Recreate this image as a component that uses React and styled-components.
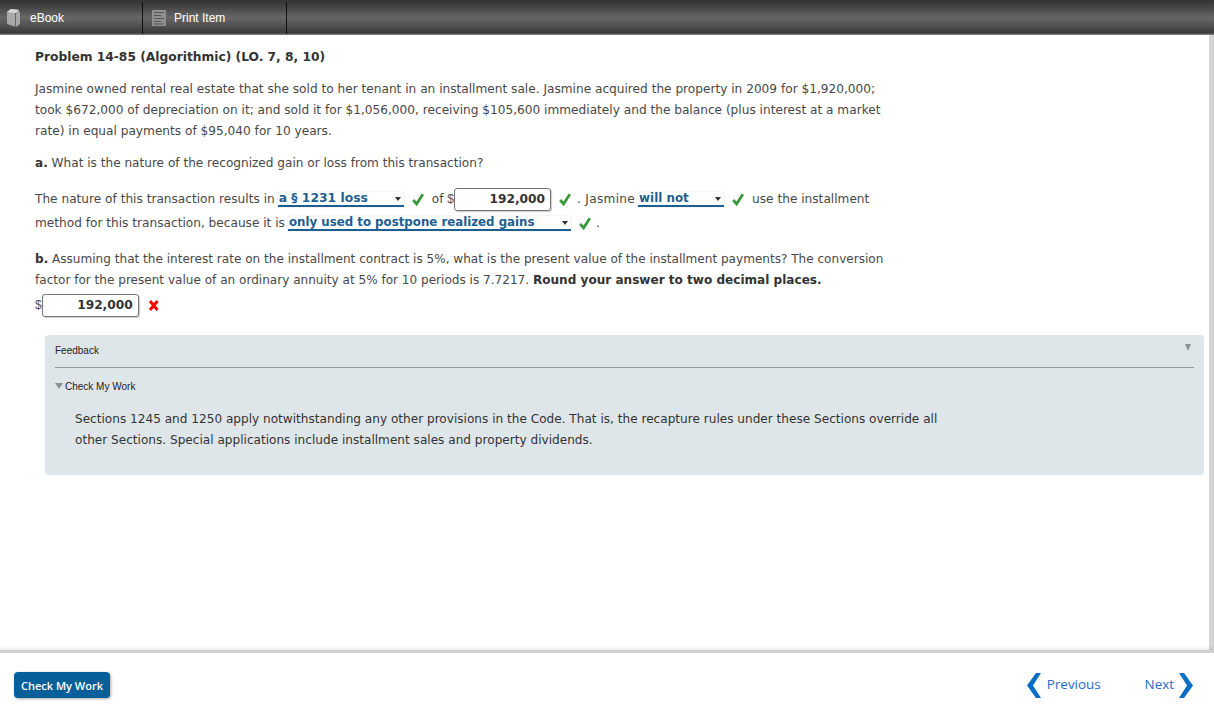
import React from "react";
import styled, { createGlobalStyle } from "styled-components";

const GlobalStyle = createGlobalStyle`
  html, body {
    margin: 0;
    padding: 0;
    background: #fff;
  }
  body {
    font-family: "DejaVu Sans", Verdana, sans-serif;
    color: #444;
    overflow: hidden;
  }
`;

const Page = styled.div`
  width: 1214px;
  height: 705px;
  display: flex;
  flex-direction: column;
  overflow: hidden;
`;

const Toolbar = styled.div`
  height: 35px;
  flex: none;
  display: flex;
  background: linear-gradient(#333 0%, #4a4a4a 25%, #676767 50%, #4f4f4f 75%, #3a3a3a 94%, #8a8a8a 100%);
  box-sizing: border-box;
`;

const ToolItem = styled.div`
  width: ${(p) => p.$width}px;
  height: 32px;
  margin-top: 2px;
  box-sizing: border-box;
  display: flex;
  align-items: center;
  gap: ${(p) => p.$gap}px;
  padding-left: ${(p) => p.$pad}px;
  border-right: 1px solid #111;
  color: #fff;
  font: 12px "Liberation Sans", Arial, sans-serif;
`;

const Body = styled.div`
  flex: 1;
  display: flex;
  min-height: 0;
`;

const Content = styled.div`
  flex: 1;
  padding: 14px 5px 0 35px;
`;

const ScrollEdge = styled.div`
  width: 5px;
  background: #d4d4d4;
`;

const Title = styled.h1`
  margin: 0 0 14px;
  font-size: 12.25px;
  line-height: 16px;
  font-weight: 700;
  color: #333;
`;

const Para = styled.p`
  margin: ${(p) => p.$before || 0}px 0 ${(p) => p.$after || 0}px;
  font-size: ${(p) => p.$size || 12.1}px;
  line-height: 21px;
  white-space: nowrap;
  color: #484848;
  b {
    color: #333;
  }
`;

const AnswerLine = styled.div`
  display: flex;
  align-items: center;
  height: 24px;
  margin-top: ${(p) => p.$before || 0}px;
  font-size: 12.15px;
  white-space: pre;
  color: #484848;
`;

const Stretched = styled.span`
  letter-spacing: 0.3px;
`;

const SelectBox = styled.span`
  width: ${(p) => p.$width}px;
  height: 13px;
  margin-left: 3px;
  margin-right: -1px;
  padding-left: 1px;
  position: relative;
  display: inline-block;
  border-bottom: 2px solid #1d5f91;
  border-radius: 2px 2px 0 0;
  box-shadow: 0 0 1px #999;
  color: #1d5f91;
  font-weight: 700;
  font-size: ${(p) => p.$size}px;
  line-height: 12px;
  &::after {
    content: "";
    position: absolute;
    right: 3px;
    top: 5px;
    border-left: 3px solid transparent;
    border-right: 3px solid transparent;
    border-top: 4px solid #333;
  }
`;

const AmountInput = styled.span`
  width: 97px;
  height: 23px;
  box-sizing: border-box;
  display: inline-flex;
  align-items: center;
  justify-content: flex-end;
  padding-right: 5px;
  border: 1px solid #777;
  border-radius: 3px;
  box-shadow: 1px 1px 1px #ccc;
  font-weight: 700;
  font-size: 12.2px;
  color: #333;
  background: #fff;
`;

const Mark = styled.svg`
  width: 12px;
  height: 13px;
  flex: none;
  margin: 0 ${(p) => p.$right}px 0 ${(p) => p.$left}px;
`;

const Currency = styled.span`
  font: 12px "Liberation Sans", Arial, sans-serif;
  color: #555;
`;

const FeedbackPanel = styled.section`
  width: 1159px;
  height: 140px;
  margin: 18px 0 0 10px;
  box-sizing: border-box;
  position: relative;
  padding: 8px 10px 0 10px;
  background: #dfe6e9;
  border-radius: 4px;
`;

const FeedbackHead = styled.div`
  height: 25px;
  box-sizing: border-box;
  border-bottom: 1px solid #8f9a9c;
  font: 10px/15px "Liberation Sans", Arial, sans-serif;
  color: #222;
`;

const PanelCaret = styled.span`
  position: absolute;
  top: 9px;
  right: 13px;
  border-left: 3px solid transparent;
  border-right: 3px solid transparent;
  border-top: 7px solid #8a9496;
`;

const WorkRow = styled.div`
  display: flex;
  align-items: center;
  gap: 2px;
  margin-top: 12px;
  height: 12px;
  font: 10px "Liberation Sans", Arial, sans-serif;
  color: #222;
`;

const SmallCaret = styled.span`
  border-left: 4px solid transparent;
  border-right: 4px solid transparent;
  border-top: 6px solid #8a9496;
`;

const WorkText = styled.p`
  margin: 17px 0 0 20px;
  font-size: 12.1px;
  line-height: 21px;
  white-space: nowrap;
  color: #333;
`;

const Footer = styled.footer`
  height: 55px;
  flex: none;
  box-sizing: border-box;
  display: flex;
  align-items: center;
  justify-content: space-between;
  padding: 12px 21px 0 14px;
  border-top: 3px solid #cfcfcf;
  box-shadow: 0 -2px 3px rgba(0, 0, 0, 0.08);
  background: #fff;
`;

const CheckButton = styled.button`
  width: 96px;
  height: 26px;
  padding: 0;
  border: none;
  border-radius: 4px;
  background: #075f99;
  box-shadow: 1px 1px 3px #aaa;
  color: #fff;
  font: 600 11px "Open Sans", sans-serif;
`;

const Pager = styled.nav`
  display: flex;
  align-items: center;
`;

const PagerLink = styled.a`
  display: flex;
  align-items: center;
  gap: ${(p) => p.$gap}px;
  margin-left: ${(p) => p.$left || 0}px;
  font: 13.4px "Open Sans", sans-serif;
  color: #1f69c9;
`;

const PagerLabel = styled.span`
  margin-top: -2px;
`;

const Chevron = styled.svg`
  width: 14px;
  height: 25px;
`;

const BookIcon = () => (
  <svg width="13" height="18" viewBox="0 0 13 18">
    <path d="M0 3 L4 0 L12 1 L12 3 L13 3 L13 15 L9 18 L0 15 Z" fill="#a8a8a8" />
    <path d="M4 0 L12 1 L8 4 L0 3 Z" fill="#d8d8d8" />
    <path d="M8.5 4 L8.5 18" stroke="#666" strokeWidth="1" />
  </svg>
);

const PrintIcon = () => (
  <svg width="14" height="16" viewBox="0 0 14 16">
    <rect width="14" height="16" fill="#8f8f8f" />
    <path d="M2 2.5h10M2 5.5h7M2 8.5h10M2 11.5h7M2 14h10" stroke="#555" strokeWidth="1" />
  </svg>
);

const Check = ({ left, right }) => (
  <Mark viewBox="0 0 12 13" $left={left} $right={right}>
    <path d="M1.2 7 L4.6 11 L10.8 1.2" fill="none" stroke="#3a9a3c" strokeWidth="2.8" />
  </Mark>
);

const Cross = ({ left }) => (
  <Mark viewBox="0 0 12 13" $left={left} $right={0}>
    <path d="M2 2 L9.5 11 M9.5 2 L2 11" fill="none" stroke="#f00" strokeWidth="3" />
  </Mark>
);

export default function App() {
  return (
    <Page>
      <GlobalStyle />
      <Toolbar>
        <ToolItem $width={143} $pad={7} $gap={10}>
          <BookIcon />
          eBook
        </ToolItem>
        <ToolItem $width={144} $pad={9} $gap={8}>
          <PrintIcon />
          Print Item
        </ToolItem>
      </Toolbar>
      <Body>
        <Content>
          <Title>Problem 14-85 (Algorithmic) (LO. 7, 8, 10)</Title>
          <Para $after={11} $size={12.15}>
            Jasmine owned rental real estate that she sold to her tenant in an installment sale. Jasmine acquired the property in 2009 for $1,920,000;
            <br />
            took $672,000 of depreciation on it; and sold it for $1,056,000, receiving $105,600 immediately and the balance (plus interest at a market
            <br />
            rate) in equal payments of $95,040 for 10 years.
          </Para>
          <Para $after={13}>
            <b>a.</b> What is the nature of the recognized gain or loss from this transaction?
          </Para>
          <AnswerLine>
            The nature of this transaction results in
            <SelectBox $width={125} $size={12.35}>a § 1231 loss</SelectBox>
            <Check left={9} right={8} />
            of <Currency>$</Currency>
            <AmountInput>192,000</AmountInput>
            <Check left={8} right={6} />
            <Stretched>. Jasmine</Stretched>
            <SelectBox $width={85} $size={11.9}>will not</SelectBox>
            <Check left={9} right={8} />
            use the installment
          </AnswerLine>
          <AnswerLine>
            method for this transaction, because it is
            <SelectBox $width={282} $size={11.8}>only used to postpone realized gains</SelectBox>
            <Check left={9} right={5} />
            .
          </AnswerLine>
          <Para $before={14} $size={12.07}>
            <b>b.</b> Assuming that the interest rate on the installment contract is 5%, what is the present value of the installment payments? The conversion
            <br />
            factor for the present value of an ordinary annuity at 5% for 10 periods is 7.7217. <b>Round your answer to two decimal places.</b>
          </Para>
          <AnswerLine $before={2}>
            <Currency>$</Currency>
            <AmountInput>192,000</AmountInput>
            <Cross left={9} />
          </AnswerLine>
          <FeedbackPanel>
            <FeedbackHead>Feedback</FeedbackHead>
            <PanelCaret />
            <WorkRow>
              <SmallCaret />
              Check My Work
            </WorkRow>
            <WorkText>
              Sections 1245 and 1250 apply notwithstanding any other provisions in the Code. That is, the recapture rules under these Sections override all
              <br />
              other Sections. Special applications include installment sales and property dividends.
            </WorkText>
          </FeedbackPanel>
        </Content>
        <ScrollEdge />
      </Body>
      <Footer>
        <CheckButton>Check My Work</CheckButton>
        <Pager>
          <PagerLink $gap={6}>
            <Chevron viewBox="0 0 14 25">
              <path d="M9 0 L14 0 L6 12.5 L14 25 L9 25 L0 12.5 Z" fill="#0a6ec4" />
            </Chevron>
            <PagerLabel>Previous</PagerLabel>
          </PagerLink>
          <PagerLink $gap={5} $left={44}>
            <PagerLabel>Next</PagerLabel>
            <Chevron viewBox="0 0 14 25">
              <path d="M5 0 L0 0 L8 12.5 L0 25 L5 25 L14 12.5 Z" fill="#0a6ec4" />
            </Chevron>
          </PagerLink>
        </Pager>
      </Footer>
    </Page>
  );
}
